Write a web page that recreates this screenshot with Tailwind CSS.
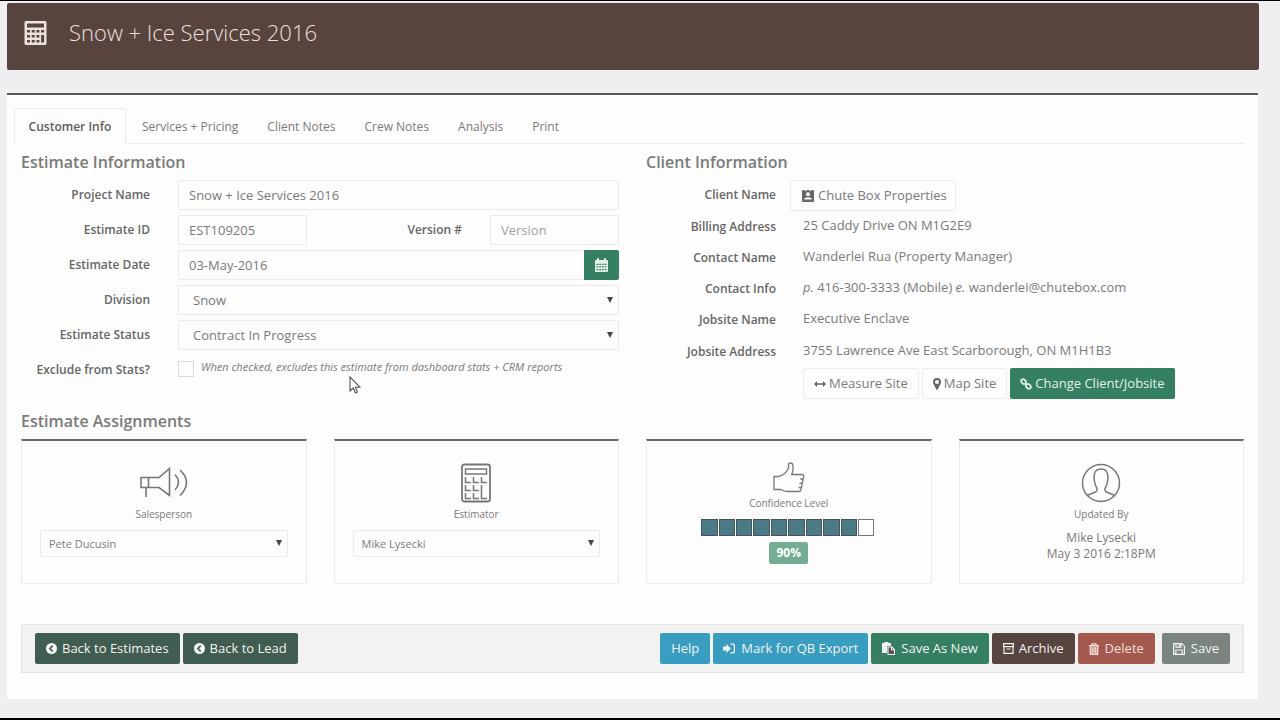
<!DOCTYPE html>
<html lang="en">
<head>
  <meta charset="UTF-8" />
  <meta name="viewport" content="width=device-width, initial-scale=1.0" />
  <title>Snow + Ice Services 2016</title>
  <script src="https://cdn.jsdelivr.net/npm/@tailwindcss/browser@4"></script>
</head>
<body class="min-h-screen flex flex-col bg-[#efeff2] border-t border-b-2 border-black font-['Open_Sans',sans-serif] text-[13px] text-[#7a7a7a]">

  <!-- Header -->
  <header class="mt-0.5 ml-[7px] mr-[21px] pl-4 pb-2 h-[67px] flex items-center gap-[21px] rounded-xs bg-[#57443f] text-[#eee0de]">
    <svg class="w-[25px] h-[26px]" viewBox="0 0 25 26" fill="currentColor">
      <path fill-rule="evenodd" d="M3 1h19q1.500 0 1.500 1.500v21q0 1.500-1.500 1.500H3q-1.500 0-1.500-1.500v-21Q1.500 1 3 1zM4 3.500v4h17v-4zM4 10v2.500h3V10zm4.700 0v2.500h3V10zm4.700 0v2.500h3V10zm4.700 0v2.500h3V10zM4 15v2.500h3V15zm4.700 0v2.500h3V15zm4.700 0v2.500h3V15zm4.700 0v7.500h3V15zM4 20v2.500h3V20zm4.700 0v2.500h3V20zm4.700 0v2.500h3V20z"/>
    </svg>
    <h1 class="text-[22px] font-light">Snow + Ice Services 2016</h1>
  </header>

  <main class="relative mt-[23px] ml-[7px] mr-[22px] px-[14px] pb-[26px] bg-[#fdfdfd] border-t-2 border-[#5f5b5d]">

    <!-- Tabs -->
    <nav class="-ml-[7px] mt-[13px] flex text-xs leading-8 border-b border-[#ececec]">
      <a href="#info" class="-mb-px w-[112px] pt-0.5 pb-px text-center font-semibold text-[#5c5c5c] bg-[#fdfdfd] border border-b-0 border-[#ececec] rounded-t-sm">Customer Info</a>
      <a href="#services" class="ml-4 pt-[3px]">Services + Pricing</a>
      <a href="#client-notes" class="ml-[29px] pt-[3px]">Client Notes</a>
      <a href="#crew-notes" class="ml-[29px] pt-[3px]">Crew Notes</a>
      <a href="#analysis" class="ml-[29px] pt-[3px]">Analysis</a>
      <a href="#print" class="ml-[29px] pt-[3px]">Print</a>
    </nav>

    <div class="grid grid-cols-2 gap-[27px]">
      <!-- Estimate information -->
      <section id="info">
        <h2 class="text-base leading-9 font-semibold">Estimate Information</h2>
        <form class="grid grid-cols-[129px_1fr] gap-x-7 gap-y-[5px]">
          <label for="project" class="text-right text-xs leading-[30px] font-semibold text-[#666]">Project Name</label>
          <input id="project" type="text" value="Snow + Ice Services 2016" class="h-[30px] w-full px-2.5 border border-[#ebebeb] rounded-xs" />

          <label for="estId" class="text-right text-xs leading-[30px] font-semibold text-[#666]">Estimate ID</label>
          <div class="flex justify-between">
            <input id="estId" type="text" value="EST109205" class="h-[30px] w-[129px] px-2.5 border border-[#ebebeb] rounded-xs" />
            <div class="flex gap-7">
              <label for="version" class="text-xs leading-[30px] font-semibold text-[#666]">Version #</label>
              <input id="version" type="text" placeholder="Version" class="h-[30px] w-[129px] px-2.5 border border-[#ebebeb] rounded-xs placeholder:text-[#a0a0a0]" />
            </div>
          </div>

          <label for="estDate" class="text-right text-xs leading-[30px] font-semibold text-[#666]">Estimate Date</label>
          <div class="flex">
            <input id="estDate" type="text" value="03-May-2016" class="h-[30px] flex-1 px-2.5 border border-r-0 border-[#ebebeb] rounded-l-xs" />
            <button type="button" aria-label="Pick date" class="h-[30px] w-[35px] flex items-center justify-center bg-[#357f63] rounded-r-xs text-[#e4f3e8]">
              <svg class="w-[13px] h-[14px]" viewBox="0 0 13 14" fill="currentColor">
                <path fill-rule="evenodd" d="M1 2h1V1q0-1 1-1t1 1v1h5V1q0-1 1-1t1 1v1h1q1 0 1 1v10q0 1-1 1H1q-1 0-1-1V3q0-1 1-1zM1.500 5.700v1.300h1.800V5.700zm2.700 0v1.300H6V5.700zm2.700 0v1.300h1.800V5.700zm2.700 0v1.300h1.800V5.700zM1.500 8.200v1.400h1.800V8.200zm2.700 0v1.400H6V8.200zm2.700 0v1.400h1.800V8.200zm2.700 0v1.400h1.800V8.200zM1.500 10.900v1.300h1.800v-1.300zm2.700 0v1.300H6v-1.300zm2.700 0v1.300h1.800v-1.300zm2.700 0v1.300h1.800v-1.300z"/>
              </svg>
            </button>
          </div>

          <label for="division" class="text-right text-xs leading-[30px] font-semibold text-[#666]">Division</label>
          <div class="relative">
            <select id="division" class="appearance-none h-[30px] w-full px-3.5 pt-0.5 border border-[#ebebeb] rounded-xs"><option>Snow</option></select>
            <svg class="absolute right-1.5 top-3 w-1.5 h-1.5 pointer-events-none" viewBox="0 0 6 6"><path d="M0 0h6L3 6z" fill="#444"/></svg>
          </div>

          <label for="status" class="text-right text-xs leading-[30px] font-semibold text-[#666]">Estimate Status</label>
          <div class="relative">
            <select id="status" class="appearance-none h-[30px] w-full px-3.5 pt-0.5 border border-[#ebebeb] rounded-xs"><option>Contract In Progress</option></select>
            <svg class="absolute right-1.5 top-3 w-1.5 h-1.5 pointer-events-none" viewBox="0 0 6 6"><path d="M0 0h6L3 6z" fill="#444"/></svg>
          </div>

          <label for="exclude" class="text-right text-xs leading-[30px] font-semibold text-[#666]">Exclude from Stats?</label>
          <div class="flex items-start gap-[7px]">
            <input id="exclude" type="checkbox" class="appearance-none mt-1.5 size-4 border border-[#dcdcdc]" />
            <span class="text-[11px] leading-6 italic">When checked, excludes this estimate from dashboard stats + CRM reports</span>
          </div>
        </form>
      </section>

      <!-- Client information -->
      <section>
        <h2 class="text-base leading-9 font-semibold">Client Information</h2>
        <dl class="grid grid-cols-[130px_1fr] gap-x-[27px] leading-[29px]">
          <dt class="text-right text-xs leading-[30px] font-semibold text-[#666]">Client Name</dt>
          <dd class="h-[31px] -ml-[13px]">
            <button class="h-[31px] pl-[11px] pr-2 flex items-center gap-1 border border-[#ececec] rounded-xs">
              <svg class="w-3 h-3" viewBox="0 0 12 12"><path fill="#666" fill-rule="evenodd" d="M1 0h2v1h1.500V0h3v1H9V0h2q1 0 1 1v10q0 1-1 1H1q-1 0-1-1V1q0-1 1-1zM6 2.300a2 2 0 1 0 0 4 2 2 0 1 0 0-4zM2.200 9.500h7.600V9Q9.500 7.200 6 7.200T2.200 9z"/></svg>
              Chute Box Properties
            </button>
          </dd>
          <dt class="text-right text-xs leading-[31px] font-semibold text-[#666]">Billing Address</dt>
          <dd>25 Caddy Drive ON M1G2E9</dd>
          <dt class="text-right text-xs leading-[31px] font-semibold text-[#666]">Contact Name</dt>
          <dd>Wanderlei Rua (Property Manager)</dd>
          <dt class="text-right text-xs leading-[31px] font-semibold text-[#666]">Contact Info</dt>
          <dd><i>p.</i> 416-300-3333 (Mobile) <i>e.</i> wanderlei@chutebox.com</dd>
          <dt class="text-right text-xs leading-8 font-semibold text-[#666]">Jobsite Name</dt>
          <dd>Executive Enclave</dd>
          <dt class="text-right text-xs leading-8 font-semibold text-[#666]">Jobsite Address</dt>
          <dd>3755 Lawrence Ave East Scarborough, ON M1H1B3</dd>
        </dl>
        <div class="pl-[157px] flex gap-[3px]">
          <button class="h-[31px] px-2.5 flex items-center gap-[3px] border border-[#ececec] rounded-xs">
            <svg class="w-3 h-2" viewBox="0 0 12 8"><path fill="#666" d="M0 4l3-3v2.200h6V1l3 3-3 3V4.800H3V7z"/></svg>
            Measure Site
          </button>
          <button class="h-[31px] px-2.5 flex items-center gap-[3px] border border-[#ececec] rounded-xs">
            <svg class="w-2 h-3" viewBox="0 0 8 12"><path fill="#666" fill-rule="evenodd" d="M4 0a4 4 0 0 1 4 4q0 1-.5 2L4.700 11.500q-.7.900-1.400 0L.5 6Q0 5 0 4a4 4 0 0 1 4-4zm0 2a2 2 0 1 0 0 4 2 2 0 1 0 0-4z"/></svg>
            Map Site
          </button>
          <button class="h-[31px] px-2.5 flex items-center gap-[3px] bg-[#357f63] rounded-xs text-[#e4f3e8] font-medium">
            <svg class="w-3 h-3" viewBox="0 0 12 12" fill="none" stroke="currentColor" stroke-width="1.800"><rect x="-2.600" y="-1.900" width="5.200" height="3.800" rx="1.700" transform="translate(3.600 3.600) rotate(45)"/><rect x="-2.600" y="-1.900" width="5.200" height="3.800" rx="1.700" transform="translate(8.400 8.400) rotate(45)"/></svg>
            Change Client/Jobsite
          </button>
        </div>
      </section>
    </div>

    <!-- Assignments -->
    <h2 class="mt-1 text-base leading-9 font-semibold">Estimate Assignments</h2>
    <div class="grid grid-cols-4 gap-[27px] text-center">
      <div class="h-[145px] px-[18px] pt-[22px] border border-t-2 border-[#ececec] border-t-[#6f686a]">
        <svg class="mx-auto w-12 h-10" viewBox="0 0 48 40" fill="none" stroke="#777" stroke-width="1.600">
          <path d="M1 14.500h18L29.500 5.500v27L19 24.500H1zM8.500 14.500v10M6 24.500v9.500M35 11.500q7 7.500 0 15.500M40 7q13 12 0 25.500"/>
        </svg>
        <label for="sales" class="block mt-[3px] text-[10px] leading-4">Salesperson</label>
        <div class="relative mt-2">
          <select id="sales" class="appearance-none h-[27px] w-full px-2 pt-0.5 text-[11px] border border-[#ebebeb] rounded-xs"><option>Pete Ducusin</option></select>
          <svg class="absolute right-1.5 top-2.5 w-1.5 h-1.5 pointer-events-none" viewBox="0 0 6 6"><path d="M0 0h6L3 6z" fill="#444"/></svg>
        </div>
      </div>

      <div class="h-[145px] px-[18px] pt-[22px] border border-t-2 border-[#ececec] border-t-[#6f686a]">
        <svg class="mx-auto w-[30px] h-10" viewBox="0 0 30 40" fill="none" stroke="#777" stroke-width="1.500">
          <rect x="1" y="1.500" width="28" height="37" rx="2.500" stroke-width="1.800"/>
          <path d="M4.500 6h21v5h-21zM4.500 14v5.500H10M12.500 14v5.500H18M20.500 14v5.500H26M4.500 22v5.500H10M12.500 22v5.500H18M4.500 30v5.500H10M12.500 30v5.500H18M20.500 22v13.500H26"/>
        </svg>
        <label for="estimator" class="block mt-[3px] text-[10px] leading-4">Estimator</label>
        <div class="relative mt-2">
          <select id="estimator" class="appearance-none h-[27px] w-full px-2 pt-0.5 text-[11px] border border-[#ebebeb] rounded-xs"><option>Mike Lysecki</option></select>
          <svg class="absolute right-1.5 top-2.5 w-1.5 h-1.5 pointer-events-none" viewBox="0 0 6 6"><path d="M0 0h6L3 6z" fill="#444"/></svg>
        </div>
      </div>

      <div class="h-[145px] pt-[21px] flex flex-col items-center border border-t-2 border-[#ececec] border-t-[#6f686a]">
        <svg class="w-8 h-[31px]" viewBox="0 0 32 31" fill="none" stroke="#777" stroke-width="1.300" stroke-linejoin="round">
          <path d="M1 14.500h4.500Q13 12.500 15.500 6V3Q15.500 1 17.500 1T20 3.500V7q0 3-1.500 5.500H29q2 0 1.700 2.200l-.4 2-2.600.3h2.300l-.5 4-2.500.3h2.200l-.6 4-2.400.2h2l-.3 2.300q-.3 1.700-2.400 1.700H14.500q-4 0-6.500-2H1z"/>
        </svg>
        <p class="mt-0.5 text-[10px] leading-4">Confidence Level</p>
        <div role="meter" aria-label="Confidence Level" aria-valuenow="90" class="mt-2 mr-0.5 w-[173px] h-[17px] flex gap-px">
          <span class="flex-1 bg-[#4c7a87] border border-[#45545a]"></span>
          <span class="flex-1 bg-[#4c7a87] border border-[#45545a]"></span>
          <span class="flex-1 bg-[#4c7a87] border border-[#45545a]"></span>
          <span class="flex-1 bg-[#4c7a87] border border-[#45545a]"></span>
          <span class="flex-1 bg-[#4c7a87] border border-[#45545a]"></span>
          <span class="flex-1 bg-[#4c7a87] border border-[#45545a]"></span>
          <span class="flex-1 bg-[#4c7a87] border border-[#45545a]"></span>
          <span class="flex-1 bg-[#4c7a87] border border-[#45545a]"></span>
          <span class="flex-1 bg-[#4c7a87] border border-[#45545a]"></span>
          <span class="flex-1 bg-white border border-[#777]"></span>
        </div>
        <span class="mt-1.5 w-[39px] text-xs leading-[22px] font-bold text-white bg-[#74ad94] rounded-xs">90%</span>
      </div>

      <div class="h-[145px] pt-[22px] border border-t-2 border-[#ececec] border-t-[#6f686a]">
        <svg class="mx-auto w-10 h-10" viewBox="0 0 40 40" fill="none" stroke="#777" stroke-width="1.500">
          <circle cx="20" cy="20" r="18.500"/>
          <path d="M6 32.500l8.500-3.500q2-1 1.500-3.500-2.500-4-3-10Q12.500 6 20 6t7 9.500q-.5 6-3 10-.5 2.500 1.500 3.500l8.500 3.500"/>
        </svg>
        <p class="mt-[3px] text-[10px] leading-4">Updated By</p>
        <p class="mt-2 text-xs">Mike Lysecki<br>May 3 2016 2:18PM</p>
      </div>
    </div>

    <!-- Actions -->
    <div class="mt-10 px-[13px] py-2 flex justify-between bg-[#f2f2f2] border border-[#e4e4e4] font-medium text-[#f2f2f2]">
      <div class="flex gap-[3px]">
        <button class="h-[31px] px-[11px] flex items-center gap-[5px] bg-[#415c50] rounded-xs">
          <svg class="w-[11px] h-[11px]" viewBox="0 0 12 12"><circle cx="6" cy="6" r="6" fill="#f5f5f5"/><path d="M7.300 2.800L4.200 6l3.100 3.200" fill="none" stroke="#415c50" stroke-width="1.800"/></svg>
          Back to Estimates
        </button>
        <button class="h-[31px] px-[11px] flex items-center gap-[5px] bg-[#415c50] rounded-xs">
          <svg class="w-[11px] h-[11px]" viewBox="0 0 12 12"><circle cx="6" cy="6" r="6" fill="#f5f5f5"/><path d="M7.300 2.800L4.200 6l3.100 3.200" fill="none" stroke="#415c50" stroke-width="1.800"/></svg>
          Back to Lead
        </button>
      </div>
      <div class="flex gap-[3px]">
        <button class="h-[31px] px-[11px] bg-[#399dc1] rounded-xs">Help</button>
        <button class="h-[31px] px-2.5 flex items-center gap-1.5 bg-[#399dc1] rounded-xs">
          <svg class="w-3 h-[11px]" viewBox="0 0 12 11" fill="currentColor"><path d="M0 3.500h3.500V1L8 5.500 3.500 10V7.500H0zM7.500.5H10q2 0 2 2v6q0 2-2 2H7.500V9.200H10q.7 0 .7-.7v-6q0-.7-.7-.7H7.500z"/></svg>
          Mark for QB Export
        </button>
        <button class="h-[31px] px-[11px] flex items-center gap-1.5 bg-[#357f63] rounded-xs">
          <svg class="w-[13px] h-[13px]" viewBox="0 0 13 13"><path fill="currentColor" d="M0 1h2.500V0h4v1H9v3H5v7H0z"/><path d="M6 5h4l2.400 2.500v5H6z" fill="#55504c" stroke="currentColor" stroke-width="1.100"/><path d="M9.500 5v3h3" fill="none" stroke="currentColor"/></svg>
          Save As New
        </button>
        <button class="h-[31px] px-[11px] flex items-center gap-[5px] bg-[#57443f] rounded-xs">
          <svg class="w-[11px] h-[11px]" viewBox="0 0 11 11" fill="none" stroke="currentColor" stroke-width="1.200"><path d="M.6.6h9.800v3H.6zM1 3.600v6.800h9V3.600M3.500 6h4"/></svg>
          Archive
        </button>
        <button class="h-[31px] px-[11px] flex items-center gap-1.5 bg-[#a3594e] rounded-xs text-[#f3dfd8]">
          <svg class="w-2.5 h-3" viewBox="0 0 10 12" fill="none" stroke="currentColor" stroke-width="1.300"><path d="M0 2.600h10M3 2.600V.8h4v1.800"/><path d="M1.300 3v8.300h7.400V3" fill="#cf9f96"/><path d="M3.500 4.500v5.300M5 4.500v5.300M6.500 4.500v5.300" stroke-width=".8"/></svg>
          Delete
        </button>
        <button class="ml-1 h-[31px] px-[11px] flex items-center gap-1.5 bg-[#79857e] rounded-xs">
          <svg class="w-3 h-3" viewBox="0 0 12 12" fill="none" stroke="currentColor" stroke-width="1.200"><path d="M.6.6h8.200l2.600 2.600v8.200H.6zM3 .6v3.600h5V.6M6.300 1v2.500M2.800 11.400V7h6.400v4.400"/></svg>
          Save
        </button>
      </div>
    </div>

    <!-- Mouse pointer -->
    <svg class="absolute left-[342px] top-[281px] w-3 h-[18px]" viewBox="0 0 12 18"><path d="M1 1v14l3.200-3 2.200 5 2-1-2.100-4.700H11z" fill="#fff" stroke="#555" stroke-width="1.100"/></svg>
  </main>

</body>
</html>
